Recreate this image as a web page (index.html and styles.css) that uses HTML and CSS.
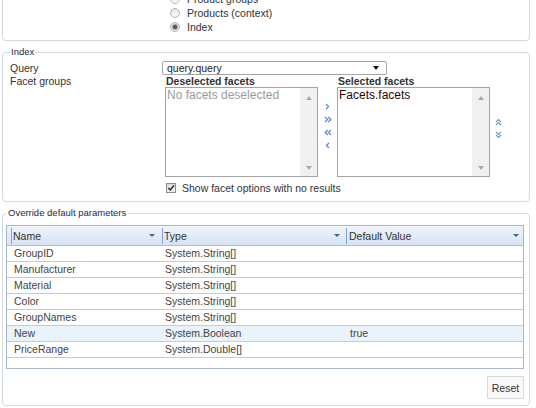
FILE: index.html
```html
<!DOCTYPE html>
<html lang="en">
<head>
<meta charset="utf-8">
<title>Index settings</title>
<link rel="stylesheet" href="styles.css">
</head>
<body>
<div class="page">
  <fieldset class="fs fs-context">
    <div class="radio-list">
      <label class="radio"><span class="radio-dot"></span>Product groups</label>
      <label class="radio"><span class="radio-dot"></span>Products (context)</label>
      <label class="radio checked"><span class="radio-dot"></span>Index</label>
    </div>
  </fieldset>

  <fieldset class="fs fs-index">
    <legend>Index</legend>
    <div class="form-row row-query">
      <div class="form-label">Query</div>
      <div class="select"><span>query.query</span><span class="select-arrow"></span></div>
    </div>
    <div class="form-row row-facets">
      <div class="form-label">Facet groups</div>
      <div class="facets">
        <div class="facet-lists">
          <div class="facet-col">
            <div class="facet-head">Deselected facets</div>
            <div class="listbox">
              <div class="listbox-items"><div class="opt-disabled">No facets deselected</div></div>
              <div class="scrollbar"><span class="sb-up"></span><span class="sb-down"></span></div>
            </div>
          </div>
          <div class="move-btns">
            <span class="btn-ico"><svg width="5" height="7" viewBox="0 0 5 7"><path d="M1 1l2.6 2.5L1 6" fill="none" stroke="#5b8ac9" stroke-width="1.2"/></svg></span>
            <span class="btn-ico"><svg width="8" height="7" viewBox="0 0 8 7"><path d="M1 1l2.6 2.5L1 6M4.2 1l2.6 2.5L4.2 6" fill="none" stroke="#5b8ac9" stroke-width="1.2"/></svg></span>
            <span class="btn-ico"><svg width="8" height="7" viewBox="0 0 8 7"><path d="M3.8 1L1.2 3.5l2.6 2.5M7 1L4.4 3.5 7 6" fill="none" stroke="#5b8ac9" stroke-width="1.2"/></svg></span>
            <span class="btn-ico"><svg width="5" height="7" viewBox="0 0 5 7"><path d="M4 1L1.4 3.5 4 6" fill="none" stroke="#5b8ac9" stroke-width="1.2"/></svg></span>
          </div>
          <div class="facet-col">
            <div class="facet-head">Selected facets</div>
            <div class="listbox">
              <div class="listbox-items"><div class="opt-selected">Facets.facets</div></div>
              <div class="scrollbar"><span class="sb-up"></span><span class="sb-down"></span></div>
            </div>
          </div>
          <div class="order-btns">
            <span class="btn-ico"><svg width="7" height="8" viewBox="0 0 7 8"><path d="M1 4l2.5-2.5L6 4M1 7l2.5-2.5L6 7" fill="none" stroke="#6c95cf" stroke-width="1.1"/></svg></span>
            <span class="btn-ico"><svg width="7" height="8" viewBox="0 0 7 8"><path d="M1 1l2.5 2.5L6 1M1 4l2.5 2.5L6 4" fill="none" stroke="#6c95cf" stroke-width="1.1"/></svg></span>
          </div>
        </div>
        <label class="check-row">
          <svg width="10" height="10" viewBox="0 0 10 10"><defs><linearGradient id="cbg" x1="0" y1="0" x2="0" y2="1"><stop offset="0" stop-color="#d9d9d9"/><stop offset="1" stop-color="#f1f1f1"/></linearGradient></defs><rect x="0.5" y="0.5" width="9" height="9" fill="url(#cbg)" stroke="#8f8f8f"/><path d="M2.3 5l2 2 3.6-4.6" fill="none" stroke="#222" stroke-width="1.4"/></svg>
          Show facet options with no results
        </label>
      </div>
    </div>
  </fieldset>

  <fieldset class="fs fs-override">
    <legend>Override default parameters</legend>
    <div class="grid">
      <div class="grid-head">
        <div class="hcell hcell-first"><div class="hcell-inner"><span>Name</span><span class="sort"></span></div></div>
        <div class="hcell hcell-type"><div class="hcell-inner"><span>Type</span><span class="sort"></span></div></div>
        <div class="hcell hcell-def"><div class="hcell-inner"><span>Default Value</span><span class="sort"></span></div></div>
      </div>
      <div class="grid-row"><div>GroupID</div><div>System.String[]</div><div></div></div>
      <div class="grid-row"><div>Manufacturer</div><div>System.String[]</div><div></div></div>
      <div class="grid-row"><div>Material</div><div>System.String[]</div><div></div></div>
      <div class="grid-row"><div>Color</div><div>System.String[]</div><div></div></div>
      <div class="grid-row"><div>GroupNames</div><div>System.String[]</div><div></div></div>
      <div class="grid-row hl"><div>New</div><div>System.Boolean</div><div>true</div></div>
      <div class="grid-row"><div>PriceRange</div><div>System.Double[]</div><div></div></div>
      <div class="grid-empty"></div>
    </div>
    <div class="actions"><button class="btn" type="button">Reset</button></div>
  </fieldset>

  <fieldset class="fs fs-next">
    <legend>Sort By</legend>
  </fieldset>
</div>
</body>
</html>
```
FILE: styles.css
```css
* { box-sizing: border-box; }

body {
  margin: 0;
  font-family: "Liberation Sans", Arial, sans-serif;
  font-size: 10.5px;
  color: #333;
  background: #fff;
}

.page {
  padding: 0 6px 0 2px;
}

.fs {
  margin: 0;
  border: 1px solid #d3d9e1;
  border-radius: 4px;
  min-width: 0;
}

.fs legend {
  padding: 0 2px;
  font-size: 9.5px;
  line-height: 12px;
  color: #1c2b45;
}

.fs-context {
  margin-top: -13px;
  padding: 4px 7px 6px 7px;
}

.fs-index {
  margin-top: 5px;
  padding: 3px 7px 6px 7px;
}

.fs-index legend { padding: 0 1px; }

.fs-override {
  margin-top: 5px;
  padding: 6px 5px 6px 3px;
}

.fs-next {
  margin-top: 0;
  padding: 0 7px;
  height: 20px;
}

/* radios */
.radio-list { margin-left: 160px; }

.radio {
  display: flex;
  align-items: center;
  height: 14px;
}

.radio-dot {
  flex: none;
  width: 10px;
  height: 10px;
  border: 1px solid #b4b4b4;
  border-radius: 50%;
  background: linear-gradient(#e4e4e4, #fafafa);
  margin-right: 7px;
  display: flex;
  align-items: center;
  justify-content: center;
}

.radio.checked .radio-dot::after {
  content: "";
  width: 4px;
  height: 4px;
  border-radius: 50%;
  background: #555;
  box-shadow: 0 0 1px 1px #9a9a9a;
}

/* form rows */
.form-row { display: flex; }

.form-label {
  flex: none;
  width: 152px;
  line-height: 14px;
}

.row-query { height: 14px; }

.row-facets .form-label { line-height: 12px; }

.select {
  width: 225px;
  height: 14px;
  border: 1px solid #a6a6a6;
  border-radius: 2px;
  display: flex;
  align-items: center;
  justify-content: space-between;
  padding: 0 7px 0 4px;
  line-height: 12px;
  color: #222;
}

.select-arrow {
  width: 0;
  height: 0;
  border-left: 3px solid transparent;
  border-right: 3px solid transparent;
  border-top: 4px solid #111;
}

/* facets */
.facets { margin-left: 3px; }

.facet-lists { display: flex; }

.facet-col { width: 153px; }

.facet-head {
  font-weight: bold;
  line-height: 12px;
  padding-left: 1px;
  color: #333;
}

.listbox {
  height: 90px;
  border: 1px solid #a3a3a3;
  display: flex;
  background: #fff;
}

.listbox-items {
  flex: 1;
  padding: 0 1px;
  font-size: 12px;
  line-height: 14px;
}

.opt-disabled { color: #9a9a9a; }
.opt-selected { color: #2b0505; }

.scrollbar {
  width: 17px;
  background: #f0f0f0;
  display: flex;
  flex-direction: column;
  justify-content: space-between;
  align-items: center;
  padding: 8px 0 6px;
}

.sb-up, .sb-down {
  width: 0;
  height: 0;
  border-left: 3px solid transparent;
  border-right: 3px solid transparent;
}

.sb-up { border-bottom: 4px solid #a8a8a8; }
.sb-down { border-top: 4px solid #a8a8a8; }

.move-btns {
  width: 19px;
  display: flex;
  flex-direction: column;
  align-items: center;
  padding-top: 25px;
}

.order-btns {
  width: 16px;
  display: flex;
  flex-direction: column;
  align-items: center;
  padding-top: 40px;
}

.btn-ico {
  height: 13px;
  display: flex;
  align-items: center;
  justify-content: center;
}

.check-row {
  display: flex;
  align-items: center;
  height: 14px;
  margin-top: 4px;
  padding-left: 1px;
}

.check-row svg { margin-right: 6px; flex: none; }

/* grid */
.grid { border: 1px solid #a9b7c8; }

.grid-head {
  display: grid;
  grid-template-columns: 155px 184px 1fr;
  height: 20px;
  border-bottom: 1px solid #b3bfcd;
  background: linear-gradient(#eff4fa, #d7e3f2);
  color: #333;
}

.hcell {
  display: flex;
  align-items: center;
}

.hcell-inner {
  flex: 1;
  height: 16px;
  border-left: 1px solid #7fa6dd;
  line-height: 16px;
  display: flex;
  justify-content: space-between;
  align-items: center;
}

.hcell-first { padding-left: 4px; }
.hcell-first .hcell-inner { padding: 0 7px 0 1px; }
.hcell-type .hcell-inner { padding: 0 6px 0 1px; }
.hcell-def .hcell-inner { padding: 0 4px 0 2px; }

.sort {
  width: 0;
  height: 0;
  border-left: 3px solid transparent;
  border-right: 3px solid transparent;
  border-top: 3px solid #4a6283;
}

.grid-row {
  display: grid;
  grid-template-columns: 155px 184px 1fr;
  height: 16px;
  border-bottom: 1px solid #c4ccd7;
  line-height: 15px;
  color: #444;
}

.grid-row > div:nth-child(1) { padding-left: 7px; }
.grid-row > div:nth-child(2) { padding-left: 3px; }
.grid-row > div:nth-child(3) { padding-left: 4px; }

.grid-row.hl { background: #e8f3fc; }

.grid-empty { height: 10px; }

.actions {
  display: flex;
  justify-content: flex-end;
  margin-top: 7px;
}

.btn {
  width: 37px;
  height: 23px;
  padding: 0;
  border: 1px solid #d8d8d8;
  border-radius: 1px;
  background: #f8f8f8;
  font: inherit;
  color: #333;
}
```
